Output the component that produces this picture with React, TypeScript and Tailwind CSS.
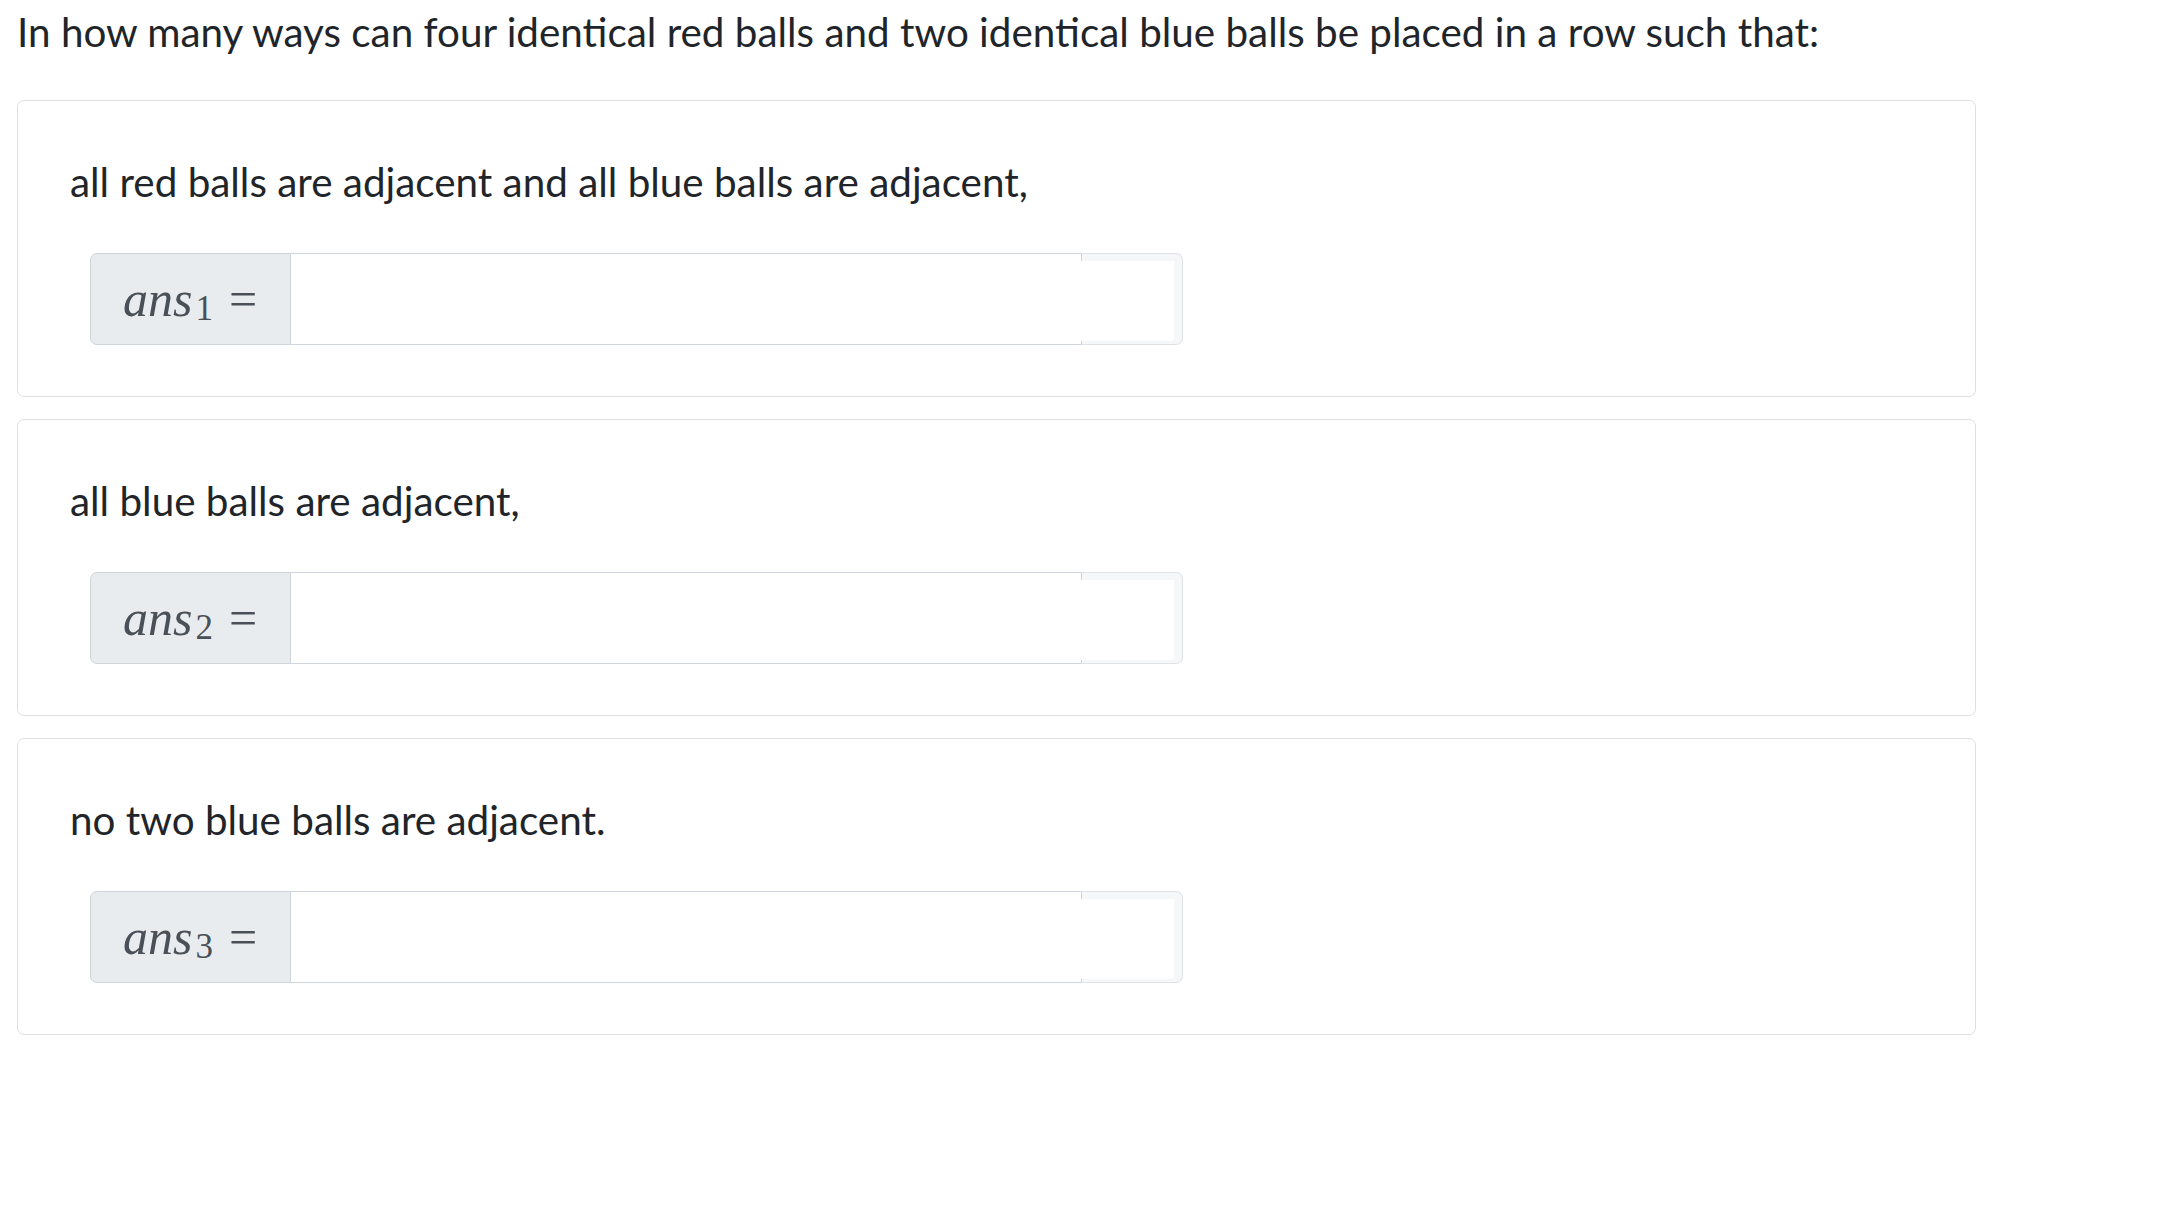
import React from "react";

const TITLE =
  "In how many ways can four identical red balls and two identical blue balls be placed in a row such that:";
const PARTS = [
  { text: "all red balls are adjacent and all blue balls are adjacent,", sub: "1" },
  { text: "all blue balls are adjacent,", sub: "2" },
  { text: "no two blue balls are adjacent.", sub: "3" },
];

function Card({ text, sub }: { text: string; sub: string }) {
  return (
    <div className="w-[1959px] rounded-[7px] border border-[#dfdfdf] bg-white pl-[52px] pt-[49px] pb-[51px]">
      <div className="text-[40.4px] leading-[64px] text-[#212529]">{text}</div>
      <div className="ml-[20px] mt-[39px] flex h-[92px] w-[1093px]">
        <div className="flex w-[201px] shrink-0 items-center rounded-l-[7px] border border-[#ced4da] bg-[#e9ecef] pl-[32px] text-[#495057]">
          <span className="font-['Liberation_Serif',serif] text-[50px] italic leading-none">ans</span>
          <span className="relative top-[9px] ml-[3px] font-['Liberation_Serif',serif] text-[35px] leading-none">
            {sub}
          </span>
          <span className="ml-[16px] font-['Liberation_Serif',serif] text-[50px] leading-none">=</span>
        </div>
        <div className="w-[790px] shrink-0 border-y border-[#ced4da] bg-white" />
        <div className="flex w-[102px] shrink-0 flex-col rounded-r-[7px] border border-[#e0e2e6] border-l-[#cfd2d6] bg-[#f6f7f9] pt-[7px] pr-[8px] pb-[3px]">
          <div className="-ml-px flex-1 rounded-br-[3px] bg-white" />
        </div>
      </div>
    </div>
  );
}

export default function App() {
  return (
    <div className="min-h-screen bg-white pl-[17px] font-['Lato',sans-serif] text-[#212529]">
      <div className="text-[40.4px] leading-[64px]">{TITLE}</div>
      <div className="mt-[36px] flex flex-col gap-[22px]">
        {PARTS.map((p) => (
          <Card key={p.sub} text={p.text} sub={p.sub} />
        ))}
      </div>
    </div>
  );
}
